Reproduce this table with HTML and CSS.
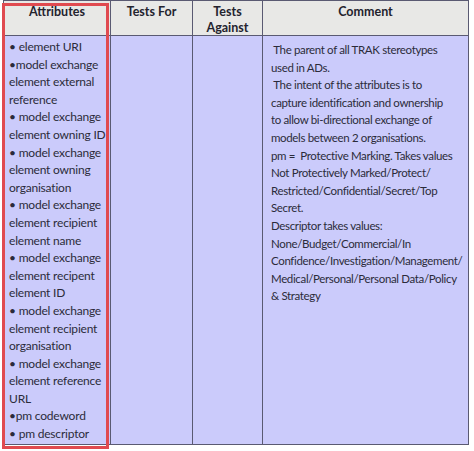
FILE: index.html
```html
<!DOCTYPE html>
<html>
<head>
<meta charset="utf-8">
<link rel="stylesheet" href="styles.css">
</head>
<body>
<div class="sheet">
  <table class="grid">
    <colgroup>
      <col class="c-attr">
      <col class="c-for">
      <col class="c-against">
      <col class="c-comment">
    </colgroup>
    <thead>
      <tr>
        <th>Attributes</th>
        <th>Tests For</th>
        <th>Tests<br>Against</th>
        <th>Comment</th>
      </tr>
    </thead>
    <tbody>
      <tr>
        <td class="attr">
          <p>&#8226; element URI</p>
          <p>&#8226;model exchange<br>element external<br>reference</p>
          <p>&#8226; model exchange<br>element owning ID</p>
          <p>&#8226; model exchange<br>element owning<br>organisation</p>
          <p>&#8226; model exchange<br>element recipient<br>element name</p>
          <p>&#8226; model exchange<br>element recipent<br>element ID</p>
          <p>&#8226; model exchange<br>element recipient<br>organisation</p>
          <p>&#8226; model exchange<br>element reference<br>URL</p>
          <p>&#8226;pm codeword</p>
          <p>&#8226; pm descriptor</p>
        </td>
        <td></td>
        <td></td>
        <td class="comment">
          <p>&nbsp;The parent of all TRAK stereotypes<br>used in ADs.</p>
          <p>&nbsp;The intent of the attributes is to<br>capture identification and ownership<br>to allow bi-directional exchange of<br>models between 2 organisations.</p>
          <p>pm =&nbsp; Protective Marking. Takes values<br>Not Protectively Marked/Protect/<br>Restricted/Confidential/Secret/Top<br>Secret.</p>
          <p>Descriptor takes values:<br>None/Budget/Commercial/In<br>Confidence/Investigation/Management/<br>Medical/Personal/Personal Data/Policy<br>&amp; Strategy</p>
        </td>
      </tr>
    </tbody>
  </table>
  <div class="highlight"></div>
</div>
</body>
</html>
```

FILE: styles.css
```css
html, body {
  margin: 0;
  padding: 0;
  background: #ffffff;
}

.sheet {
  position: relative;
  width: 474px;
  height: 451px;
  overflow: hidden;
}

.grid {
  margin-left: 3px;
  border-collapse: collapse;
  table-layout: fixed;
  width: 465px;
  font-family: Lato, "Open Sans", sans-serif;
  color: #2b2b3a;
}

.c-attr { width: 107px; }
.c-for { width: 82px; }
.c-against { width: 70px; }
.c-comment { width: 206px; }

.grid th,
.grid td {
  border: 1px solid #5a5a72;
  padding: 0;
}

.grid th {
  background: #e8e8e6;
  height: 32px;
  font-size: 12.5px;
  font-weight: 700;
  line-height: 15.5px;
  text-align: center;
  vertical-align: top;
  padding-top: 3px;
  box-sizing: border-box;
  color: #23232e;
}

.grid td {
  background: #cbcbfb;
  height: 409px;
  vertical-align: top;
  line-height: 17.6px;
  box-sizing: border-box;
}

.grid td p {
  margin: 0;
  white-space: nowrap;
}

.attr {
  font-size: 12px;
  letter-spacing: -0.2px;
  padding: 2px 0 0 5px !important;
}

.comment {
  font-size: 11.5px;
  letter-spacing: -0.35px;
  padding: 5px 0 0 8px !important;
}

.highlight {
  position: absolute;
  left: 2px;
  top: 3px;
  width: 107px;
  height: 446px;
  box-sizing: border-box;
  border: 3px solid #e04a50;
}
```
